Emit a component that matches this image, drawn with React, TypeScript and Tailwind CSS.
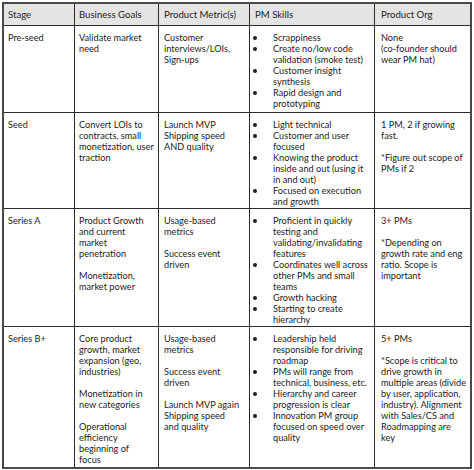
import React from "react";

type Item = string[];

const Lines = ({ lines }: { lines: string[] }) => (
  <div className="whitespace-nowrap">
    {lines.map((l, i) => (
      <React.Fragment key={i}>
        {l}
        {i < lines.length - 1 && <br />}
      </React.Fragment>
    ))}
  </div>
);

const Paras = ({ paras }: { paras: string[][] }) => (
  <div className="flex flex-col gap-[11px]">
    {paras.map((p, i) => (
      <Lines key={i} lines={p} />
    ))}
  </div>
);

const Bullets = ({ items }: { items: Item[] }) => (
  <div className="flex flex-col">
    {items.map((it, i) => (
      <div key={i} className="flex">
        <div className="w-[20px] shrink-0 pt-[4px]">
          <div className="h-[3.5px] w-[3.5px] rounded-full bg-[#1e1e1e]" />
        </div>
        <Lines lines={it} />
      </div>
    ))}
  </div>
);

const cellBase = "border-[#2b2b2b] overflow-visible";

export default function App() {
  const rows: {
    stage: string;
    goals: string[][];
    metrics: string[][];
    skills: Item[];
    org: string[][];
  }[] = [
    {
      stage: "Pre-seed",
      goals: [["Validate market", "need"]],
      metrics: [["Customer", "interviews/LOIs,", "Sign-ups"]],
      skills: [
        ["Scrappiness"],
        ["Create no/low code", "validation (smoke test)"],
        ["Customer insight", "synthesis"],
        ["Rapid design and", "prototyping"],
      ],
      org: [["None", "(co-founder should", "wear PM hat)"]],
    },
    {
      stage: "Seed",
      goals: [["Convert LOIs to", "contracts, small", "monetization, user", "traction"]],
      metrics: [["Launch MVP", "Shipping speed", "AND quality"]],
      skills: [
        ["Light technical"],
        ["Customer and user", "focused"],
        ["Knowing the product", "inside and out (using it", "in and out)"],
        ["Focused on execution", "and growth"],
      ],
      org: [["1 PM, 2 if growing", "fast."], ["*Figure out scope of", "PMs if 2"]],
    },
    {
      stage: "Series A",
      goals: [
        ["Product Growth", "and current", "market", "penetration"],
        ["Monetization,", "market power"],
      ],
      metrics: [["Usage-based", "metrics"], ["Success event", "driven"]],
      skills: [
        ["Proficient in quickly", "testing and", "validating/invalidating", "features"],
        ["Coordinates well across", "other PMs and small", "teams"],
        ["Growth hacking"],
        ["Starting to create", "hierarchy"],
      ],
      org: [["3+ PMs"], ["*Depending on", "growth rate and eng", "ratio. Scope is", "important"]],
    },
    {
      stage: "Series B+",
      goals: [
        ["Core product", "growth, market", "expansion (geo,", "industries)"],
        ["Monetization in", "new categories"],
        ["Operational", "efficiency", "beginning of", "focus"],
      ],
      metrics: [
        ["Usage-based", "metrics"],
        ["Success event", "driven"],
        ["Launch MVP again", "Shipping speed", "and quality"],
      ],
      skills: [
        ["Leadership held", "responsible for driving", "roadmap"],
        ["PMs will range from", "technical, business, etc."],
        ["Hierarchy and career", "progression is clear"],
        ["Innovation PM group", "focused on speed over", "quality"],
      ],
      org: [
        ["5+ PMs"],
        ["*Scope is critical to", "drive growth in", "multiple areas (divide", "by user, application,", "industry). Alignment", "with Sales/CS and", "Roadmapping are", "key"],
      ],
    },
  ];

  const headers = ["Stage", "Business Goals", "Product Metric(s)", "PM Skills", "Product Org"];
  const padL = ["pl-[4px]", "pl-[4px]", "pl-[5px]", "pl-[5px]", "pl-[6px]"];

  return (
    <div className="min-h-[470px] w-[474px] bg-white pl-[2px] pt-[2px] [font-family:Lato,'Liberation_Sans',sans-serif] text-[9.2px] leading-[11px] text-[#1c1c1c]">
      <div className="grid w-[470px] grid-cols-[71px_84px_91px_125px_95px] grid-rows-[22px_87px_96px_118px_140px] border-2 border-[#4a4a4a]">
        {headers.map((h, i) => (
          <div
            key={h}
            className={`${cellBase} ${padL[i]} flex items-center border-b bg-[#e4e4e4] text-[9.6px] ${i < 4 ? "border-r" : ""}`}
          >
            {h}
          </div>
        ))}
        {rows.map((r, ri) => {
          const last = ri === rows.length - 1;
          const b = last ? "" : "border-b";
          return (
            <React.Fragment key={r.stage}>
              <div className={`${cellBase} ${b} border-r pl-[4px] pt-[6px]`}>{r.stage}</div>
              <div className={`${cellBase} ${b} border-r pl-[4px] pt-[6px]`}>
                <Paras paras={r.goals} />
              </div>
              <div className={`${cellBase} ${b} border-r pl-[5px] pt-[6px]`}>
                <Paras paras={r.metrics} />
              </div>
              <div className={`${cellBase} ${b} border-r pl-[3px] pt-[6px]`}>
                <Bullets items={r.skills} />
              </div>
              <div className={`${cellBase} ${b} pl-[6px] pt-[6px]`}>
                <Paras paras={r.org} />
              </div>
            </React.Fragment>
          );
        })}
      </div>
    </div>
  );
}
